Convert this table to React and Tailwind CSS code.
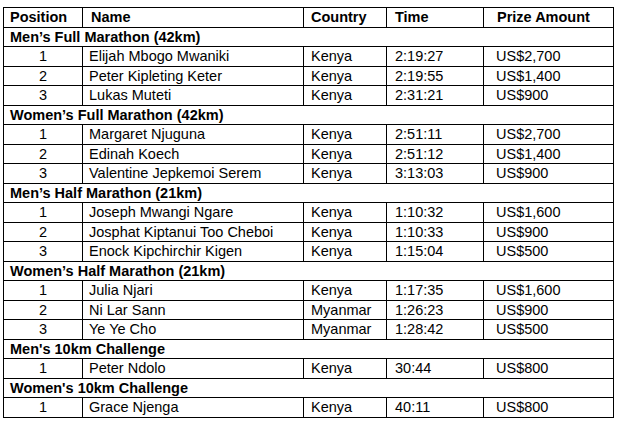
const sections = [
  {
    title: 'Men’s Full Marathon (42km)',
    rows: [
      ['1', 'Elijah Mbogo Mwaniki', 'Kenya', '2:19:27', 'US$2,700'],
      ['2', 'Peter Kipleting Keter', 'Kenya', '2:19:55', 'US$1,400'],
      ['3', 'Lukas Muteti', 'Kenya', '2:31:21', 'US$900'],
    ],
  },
  {
    title: 'Women’s Full Marathon (42km)',
    rows: [
      ['1', 'Margaret Njuguna', 'Kenya', '2:51:11', 'US$2,700'],
      ['2', 'Edinah Koech', 'Kenya', '2:51:12', 'US$1,400'],
      ['3', 'Valentine Jepkemoi Serem', 'Kenya', '3:13:03', 'US$900'],
    ],
  },
  {
    title: 'Men’s Half Marathon (21km)',
    rows: [
      ['1', 'Joseph Mwangi Ngare', 'Kenya', '1:10:32', 'US$1,600'],
      ['2', 'Josphat Kiptanui Too Cheboi', 'Kenya', '1:10:33', 'US$900'],
      ['3', 'Enock Kipchirchir Kigen', 'Kenya', '1:15:04', 'US$500'],
    ],
  },
  {
    title: 'Women’s Half Marathon (21km)',
    rows: [
      ['1', 'Julia Njari', 'Kenya', '1:17:35', 'US$1,600'],
      ['2', 'Ni Lar Sann', 'Myanmar', '1:26:23', 'US$900'],
      ['3', 'Ye Ye Cho', 'Myanmar', '1:28:42', 'US$500'],
    ],
  },
  {
    title: "Men's 10km Challenge",
    rows: [['1', 'Peter Ndolo', 'Kenya', '30:44', 'US$800']],
  },
  {
    title: "Women's 10km Challenge",
    rows: [['1', 'Grace Njenga', 'Kenya', '40:11', 'US$800']],
  },
]

const cell =
  'flex items-center h-[19.5px] border-r border-b border-black leading-4 whitespace-nowrap overflow-hidden'

export default function App() {
  return (
    <div className="min-h-screen bg-white pl-[3px] pt-[7px] font-['Liberation_Sans',Arial,sans-serif] text-[14.5px] text-black">
      <div className="grid w-[611px] grid-cols-[79px_221px_83px_97px_130px] border-t border-l border-black">
        <div className={`${cell} pl-[6px] font-bold`}>Position</div>
        <div className={`${cell} pl-[8px] font-bold`}>Name</div>
        <div className={`${cell} pl-[7px] font-bold`}>Country</div>
        <div className={`${cell} pl-[8px] font-bold`}>Time</div>
        <div className={`${cell} pl-[13px] font-bold`}>Prize Amount</div>

        {sections.map((section) => (
          <SectionRows key={section.title} section={section} />
        ))}
      </div>
    </div>
  )
}

function SectionRows({ section }) {
  return (
    <>
      <div className={`${cell} col-span-5 pl-[6px] font-bold`}>{section.title}</div>
      {section.rows.map((row) => (
        <Row key={row[1]} row={row} />
      ))}
    </>
  )
}

function Row({ row }) {
  return (
    <>
      <div className={`${cell} justify-center`}>{row[0]}</div>
      <div className={`${cell} pl-[6px]`}>{row[1]}</div>
      <div className={`${cell} pl-[7px]`}>{row[2]}</div>
      <div className={`${cell} pl-[8px]`}>{row[3]}</div>
      <div className={`${cell} pl-[12px]`}>{row[4]}</div>
    </>
  )
}
